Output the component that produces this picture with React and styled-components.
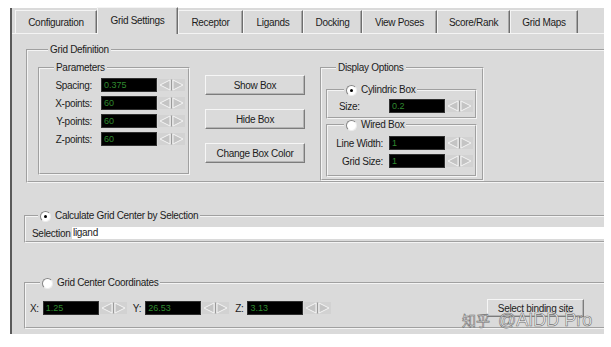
import React from "react";
import styled, { createGlobalStyle } from "styled-components";

const GlobalStyle = createGlobalStyle`
  html, body {
    margin: 0;
    padding: 0;
    background: #ffffff;
  }
  body {
    font-family: "Liberation Sans", Arial, sans-serif;
    font-size: 10px;
    letter-spacing: -0.3px;
    color: #1c1c1c;
  }
`;

const Window = styled.div`
  position: relative;
  margin: 8px 0 0 10px;
  width: 592px;
  height: 326px;
  border-left: 2px solid #5a5a5a;
  background: #dadada;
  display: flex;
  flex-direction: column;
`;

const TabBar = styled.div`
  display: flex;
  align-items: flex-end;
  height: 25px;
  padding-left: 3px;
  box-sizing: border-box;
  position: relative;
  z-index: 2;
`;

const Tab = styled.div`
  width: ${(p) => p.$w}px;
  height: ${(p) => (p.$active ? 27 : 23)}px;
  margin-bottom: ${(p) => (p.$active ? -1 : 0)}px;
  box-sizing: border-box;
  display: flex;
  align-items: center;
  justify-content: center;
  padding-bottom: ${(p) => (p.$active ? 2 : 0)}px;
  background: #dadada;
  border-top: 1px solid #f4f4f4;
  border-left: 1px solid #f4f4f4;
  border-right: 1px solid #6e6e6e;
  box-shadow: inset -1px 0 0 #a6a6a6;
`;

const Page = styled.div`
  flex: 1;
  border-top: 1px solid #f4f4f4;
  overflow: hidden;
  padding: 10px 0 4px 12px;
  box-sizing: border-box;
`;

const Frame = styled.fieldset`
  margin: 0;
  min-width: 0;
  border: 2px groove #f4f4f4;
  box-sizing: border-box;
  padding: ${(p) => p.$pad || "0"};
`;

const WideFrame = styled(Frame)`
  margin: ${(p) => p.$top || 0}px -10px 0 ${(p) => p.$left || 0}px;
`;

const Legend = styled.legend`
  margin-left: ${(p) => p.$indent || 8}px;
  padding: 0 2px;
  height: 12px;
  line-height: 12px;
  display: flex;
  align-items: center;
  gap: 4px;
`;

const DefBody = styled.div`
  display: flex;
  align-items: flex-start;
`;

const ParamFrame = styled(Frame)`
  width: 152px;
`;

const FieldGrid = styled.div`
  display: flex;
  flex-direction: column;
  gap: 4px;
`;

const FieldRow = styled.div`
  display: flex;
  align-items: center;
  height: 14px;
`;

const FieldLabel = styled.span`
  width: ${(p) => p.$w}px;
  margin-right: ${(p) => p.$gap}px;
  text-align: ${(p) => p.$align || "right"};
  padding-left: ${(p) => p.$indent || 0}px;
  box-sizing: border-box;
  white-space: nowrap;
`;

const Entry = styled.div`
  width: 56px;
  height: 14px;
  box-sizing: border-box;
  background: #000;
  border: 1px solid #303030;
  color: #2f8a2f;
  font-size: 9px;
  line-height: 12px;
  padding-left: 2px;
  letter-spacing: 0;
`;

const ArrowBox = styled.span`
  display: inline-flex;
  margin-left: 1px;
  width: 27px;
  height: 12px;
`;

const ButtonColumn = styled.div`
  display: flex;
  flex-direction: column;
  gap: 14px;
  margin-left: 15px;
  padding-top: 13px;
`;

const Button = styled.div`
  width: ${(p) => p.$w || 100}px;
  height: ${(p) => p.$h || 20}px;
  box-sizing: border-box;
  display: flex;
  align-items: center;
  justify-content: center;
  background: #dadada;
  border: 1px solid;
  border-color: #f6f6f6 #7c7c7c #7c7c7c #f6f6f6;
  box-shadow: inset -1px -1px 0 #b4b4b4;
  white-space: nowrap;
`;

const DisplayFrame = styled(Frame)`
  width: 164px;
  margin-left: 15px;
  padding: 10px 5px 2px 4px;
`;

const Radio = styled.span`
  width: 9px;
  height: 9px;
  border-radius: 50%;
  background: #fff;
  border: 1px solid;
  border-color: #858585 #ececec #ececec #858585;
  display: inline-flex;
  align-items: center;
  justify-content: center;
  &::after {
    content: "";
    width: 3px;
    height: 3px;
    border-radius: 50%;
    background: ${(p) => (p.$on ? "#000" : "transparent")};
  }
`;

const SelRow = styled.div`
  display: flex;
  align-items: center;
  padding-left: 6px;
`;

const TextEntry = styled.div`
  flex: 1;
  height: 12px;
  line-height: 12px;
  background: #fff;
  padding-left: 1px;
`;

const CoordRow = styled.div`
  display: flex;
  align-items: center;
  height: 18px;
  padding-left: 4px;
`;

const CoordGroup = styled.div`
  display: flex;
  align-items: center;
  margin-right: 6px;
`;

const CoordLabel = styled.span`
  margin-right: 4px;
`;

const PushRight = styled.div`
  margin-left: auto;
`;

const Watermark = styled.div`
  position: absolute;
  left: 450px;
  top: 302px;
  display: flex;
  align-items: baseline;
  gap: 8px;
  color: rgba(255, 255, 255, 0.92);
  -webkit-text-stroke: 0.6px #6e6e6e;
  letter-spacing: 0;
  pointer-events: none;
`;

const WmCjk = styled.span`
  font-family: "Noto Sans CJK SC", sans-serif;
  font-size: 14px;
`;

const WmLatin = styled.span`
  font-family: "Liberation Sans", Arial, sans-serif;
  font-size: 18px;
`;

const Spinner = () => (
  <ArrowBox>
    <svg width="27" height="12" viewBox="0 0 27 12">
      <rect x="0" y="0" width="27" height="12" fill="#d2d2d2" />
      <polygon points="12,1 2,6 12,11" fill="#c4c4c4" stroke="#f4f4f4" strokeWidth="1" />
      <line x1="13.5" y1="0.5" x2="13.5" y2="11.5" stroke="#9a9a9a" strokeWidth="1" />
      <polygon points="15,1 25,6 15,11" fill="#c4c4c4" stroke="#f4f4f4" strokeWidth="1" />
    </svg>
  </ArrowBox>
);

const tabs = [
  ["Configuration", 82],
  ["Grid Settings", 81],
  ["Receptor", 65],
  ["Ligands", 60],
  ["Docking", 59],
  ["View Poses", 75],
  ["Score/Rank", 73],
  ["Grid Maps", 68],
];

const params = [
  ["Spacing:", "0.375"],
  ["X-points:", "60"],
  ["Y-points:", "60"],
  ["Z-points:", "60"],
];

const coords = [
  ["X:", "1.25"],
  ["Y:", "26.53"],
  ["Z:", "3.13"],
];

const Field = ({ label, value, w, gap, align, indent }) => (
  <FieldRow>
    <FieldLabel $w={w} $gap={gap} $align={align} $indent={indent}>
      {label}
    </FieldLabel>
    <Entry>{value}</Entry>
    <Spinner />
  </FieldRow>
);

export default function App() {
  return (
    <>
      <GlobalStyle />
      <Window>
        <TabBar>
          {tabs.map(([name, w]) => (
            <Tab key={name} $w={w} $active={name === "Grid Settings"}>
              {name}
            </Tab>
          ))}
        </TabBar>
        <Page>
          <WideFrame $left={2} $pad="6px 0 0 10px">
            <Legend $indent={10}>Grid Definition</Legend>
            <DefBody>
              <ParamFrame $pad="4px 0 27px 4px">
                <Legend $indent={10}>Parameters</Legend>
                <FieldGrid>
                  {params.map(([l, v]) => (
                    <Field key={l} label={l} value={v} w={48} gap={9} />
                  ))}
                </FieldGrid>
              </ParamFrame>
              <ButtonColumn>
                <Button>Show Box</Button>
                <Button>Hide Box</Button>
                <Button>Change Box Color</Button>
              </ButtonColumn>
              <DisplayFrame>
                <Legend $indent={10}>Display Options</Legend>
                <Frame $pad="3px 0 4px 3px">
                  <Legend $indent={13}>
                    <Radio $on />
                    Cylindric Box
                  </Legend>
                  <Field label="Size:" value="0.2" w={52} gap={6} align="left" indent={8} />
                </Frame>
                <Frame $pad="5px 0 7px 3px">
                  <Legend $indent={13}>
                    <Radio />
                    Wired Box
                  </Legend>
                  <FieldGrid>
                    <Field label="Line Width:" value="1" w={52} gap={6} />
                    <Field label="Grid Size:" value="1" w={52} gap={6} />
                  </FieldGrid>
                </Frame>
              </DisplayFrame>
            </DefBody>
          </WideFrame>

          <WideFrame $top={27} $pad="5px 0 2px 0">
            <Legend $indent={12}>
              <Radio $on />
              Calculate Grid Center by Selection
            </Legend>
            <SelRow>
              <FieldLabel $w={38} $gap={2} $align="left">
                Selection
              </FieldLabel>
              <TextEntry>ligand</TextEntry>
            </SelRow>
          </WideFrame>

          <WideFrame $top={34} $pad="10px 28px 10px 0">
            <Legend $indent={14}>
              <Radio />
              Grid Center Coordinates
            </Legend>
            <CoordRow>
              {coords.map(([l, v]) => (
                <CoordGroup key={l}>
                  <CoordLabel>{l}</CoordLabel>
                  <Entry>{v}</Entry>
                  <Spinner />
                </CoordGroup>
              ))}
              <PushRight>
                <Button $w={97} $h={18}>Select binding site</Button>
              </PushRight>
            </CoordRow>
          </WideFrame>
        </Page>
        <Watermark>
          <WmCjk>知乎</WmCjk>
          <WmLatin>@AIDD Pro</WmLatin>
        </Watermark>
      </Window>
    </>
  );
}
